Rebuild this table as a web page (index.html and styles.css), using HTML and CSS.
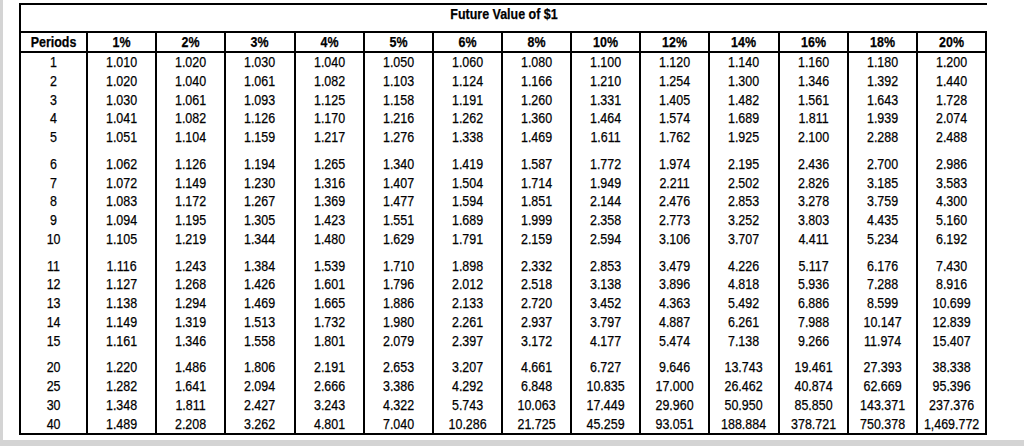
FILE: index.html
```html
<!DOCTYPE html>
<html>
<head>
<meta charset="utf-8">
<link rel="stylesheet" href="styles.css">
</head>
<body>
<div class="frame">
  <div class="fv">
    <div class="title"><div class="t">Future Value of $1</div></div>

    <div class="hd first"><div class="t">Periods</div></div>
    <div class="hd"><div class="t">1%</div></div>
    <div class="hd"><div class="t">2%</div></div>
    <div class="hd"><div class="t">3%</div></div>
    <div class="hd"><div class="t">4%</div></div>
    <div class="hd"><div class="t">5%</div></div>
    <div class="hd"><div class="t">6%</div></div>
    <div class="hd"><div class="t">8%</div></div>
    <div class="hd"><div class="t">10%</div></div>
    <div class="hd"><div class="t">12%</div></div>
    <div class="hd"><div class="t">14%</div></div>
    <div class="hd"><div class="t">16%</div></div>
    <div class="hd"><div class="t">18%</div></div>
    <div class="hd"><div class="t">20%</div></div>

    <div class="cell first gap"><div class="t">1<br>2<br>3<br>4<br>5</div></div>
    <div class="cell gap"><div class="t">1.010<br>1.020<br>1.030<br>1.041<br>1.051</div></div>
    <div class="cell gap"><div class="t">1.020<br>1.040<br>1.061<br>1.082<br>1.104</div></div>
    <div class="cell gap"><div class="t">1.030<br>1.061<br>1.093<br>1.126<br>1.159</div></div>
    <div class="cell gap"><div class="t">1.040<br>1.082<br>1.125<br>1.170<br>1.217</div></div>
    <div class="cell gap"><div class="t">1.050<br>1.103<br>1.158<br>1.216<br>1.276</div></div>
    <div class="cell gap"><div class="t">1.060<br>1.124<br>1.191<br>1.262<br>1.338</div></div>
    <div class="cell gap"><div class="t">1.080<br>1.166<br>1.260<br>1.360<br>1.469</div></div>
    <div class="cell gap"><div class="t">1.100<br>1.210<br>1.331<br>1.464<br>1.611</div></div>
    <div class="cell gap"><div class="t">1.120<br>1.254<br>1.405<br>1.574<br>1.762</div></div>
    <div class="cell gap"><div class="t">1.140<br>1.300<br>1.482<br>1.689<br>1.925</div></div>
    <div class="cell gap"><div class="t">1.160<br>1.346<br>1.561<br>1.811<br>2.100</div></div>
    <div class="cell gap"><div class="t">1.180<br>1.392<br>1.643<br>1.939<br>2.288</div></div>
    <div class="cell gap"><div class="t">1.200<br>1.440<br>1.728<br>2.074<br>2.488</div></div>

    <div class="cell first gap"><div class="t">6<br>7<br>8<br>9<br>10</div></div>
    <div class="cell gap"><div class="t">1.062<br>1.072<br>1.083<br>1.094<br>1.105</div></div>
    <div class="cell gap"><div class="t">1.126<br>1.149<br>1.172<br>1.195<br>1.219</div></div>
    <div class="cell gap"><div class="t">1.194<br>1.230<br>1.267<br>1.305<br>1.344</div></div>
    <div class="cell gap"><div class="t">1.265<br>1.316<br>1.369<br>1.423<br>1.480</div></div>
    <div class="cell gap"><div class="t">1.340<br>1.407<br>1.477<br>1.551<br>1.629</div></div>
    <div class="cell gap"><div class="t">1.419<br>1.504<br>1.594<br>1.689<br>1.791</div></div>
    <div class="cell gap"><div class="t">1.587<br>1.714<br>1.851<br>1.999<br>2.159</div></div>
    <div class="cell gap"><div class="t">1.772<br>1.949<br>2.144<br>2.358<br>2.594</div></div>
    <div class="cell gap"><div class="t">1.974<br>2.211<br>2.476<br>2.773<br>3.106</div></div>
    <div class="cell gap"><div class="t">2.195<br>2.502<br>2.853<br>3.252<br>3.707</div></div>
    <div class="cell gap"><div class="t">2.436<br>2.826<br>3.278<br>3.803<br>4.411</div></div>
    <div class="cell gap"><div class="t">2.700<br>3.185<br>3.759<br>4.435<br>5.234</div></div>
    <div class="cell gap"><div class="t">2.986<br>3.583<br>4.300<br>5.160<br>6.192</div></div>

    <div class="cell first gap"><div class="t">11<br>12<br>13<br>14<br>15</div></div>
    <div class="cell gap"><div class="t">1.116<br>1.127<br>1.138<br>1.149<br>1.161</div></div>
    <div class="cell gap"><div class="t">1.243<br>1.268<br>1.294<br>1.319<br>1.346</div></div>
    <div class="cell gap"><div class="t">1.384<br>1.426<br>1.469<br>1.513<br>1.558</div></div>
    <div class="cell gap"><div class="t">1.539<br>1.601<br>1.665<br>1.732<br>1.801</div></div>
    <div class="cell gap"><div class="t">1.710<br>1.796<br>1.886<br>1.980<br>2.079</div></div>
    <div class="cell gap"><div class="t">1.898<br>2.012<br>2.133<br>2.261<br>2.397</div></div>
    <div class="cell gap"><div class="t">2.332<br>2.518<br>2.720<br>2.937<br>3.172</div></div>
    <div class="cell gap"><div class="t">2.853<br>3.138<br>3.452<br>3.797<br>4.177</div></div>
    <div class="cell gap"><div class="t">3.479<br>3.896<br>4.363<br>4.887<br>5.474</div></div>
    <div class="cell gap"><div class="t">4.226<br>4.818<br>5.492<br>6.261<br>7.138</div></div>
    <div class="cell gap"><div class="t">5.117<br>5.936<br>6.886<br>7.988<br>9.266</div></div>
    <div class="cell gap"><div class="t">6.176<br>7.288<br>8.599<br>10.147<br>11.974</div></div>
    <div class="cell gap"><div class="t">7.430<br>8.916<br>10.699<br>12.839<br>15.407</div></div>

    <div class="cell first"><div class="t">20<br>25<br>30<br>40</div></div>
    <div class="cell"><div class="t">1.220<br>1.282<br>1.348<br>1.489</div></div>
    <div class="cell"><div class="t">1.486<br>1.641<br>1.811<br>2.208</div></div>
    <div class="cell"><div class="t">1.806<br>2.094<br>2.427<br>3.262</div></div>
    <div class="cell"><div class="t">2.191<br>2.666<br>3.243<br>4.801</div></div>
    <div class="cell"><div class="t">2.653<br>3.386<br>4.322<br>7.040</div></div>
    <div class="cell"><div class="t">3.207<br>4.292<br>5.743<br>10.286</div></div>
    <div class="cell"><div class="t">4.661<br>6.848<br>10.063<br>21.725</div></div>
    <div class="cell"><div class="t">6.727<br>10.835<br>17.449<br>45.259</div></div>
    <div class="cell"><div class="t">9.646<br>17.000<br>29.960<br>93.051</div></div>
    <div class="cell"><div class="t">13.743<br>26.462<br>50.950<br>188.884</div></div>
    <div class="cell"><div class="t">19.461<br>40.874<br>85.850<br>378.721</div></div>
    <div class="cell"><div class="t">27.393<br>62.669<br>143.371<br>750.378</div></div>
    <div class="cell"><div class="t">38.338<br>95.396<br>237.376<br>1,469.772</div></div>
  </div>
</div>
</body>
</html>
```

FILE: styles.css
```css
html, body {
  margin: 0;
  padding: 0;
  background: #ffffff;
}

.frame {
  box-sizing: border-box;
  width: 1024px;
  height: 446px;
  border-left: 3px solid #d4d4d4;
  border-bottom: 6px solid #d4d4d4;
  padding: 3px 0 0 16px;
  font-family: "Liberation Sans", Arial, sans-serif;
  color: #000;
}

.fv {
  width: 968px;
  display: grid;
  grid-template-columns: repeat(14, 1fr);
  border-top: 2px solid #000;
  border-bottom: 2px solid #000;
}

.t {
  transform: scaleX(0.83);
  text-align: center;
  white-space: nowrap;
  -webkit-text-stroke: 0.25px #000;
}

.title {
  grid-column: 1 / -1;
  height: 26px;
  border-left: 2px solid #000;
  font-size: 15px;
  font-weight: bold;
  line-height: 18px;
}

.hd {
  height: 18px;
  border-top: 2px solid #000;
  border-bottom: 2px solid #000;
  border-right: 2px solid #000;
  font-size: 15px;
  font-weight: bold;
  line-height: 18px;
}

.cell {
  border-right: 2px solid #000;
  font-size: 15px;
  line-height: 18.75px;
}

.first {
  border-left: 2px solid #000;
}

.gap {
  padding-bottom: 8px;
}
```
